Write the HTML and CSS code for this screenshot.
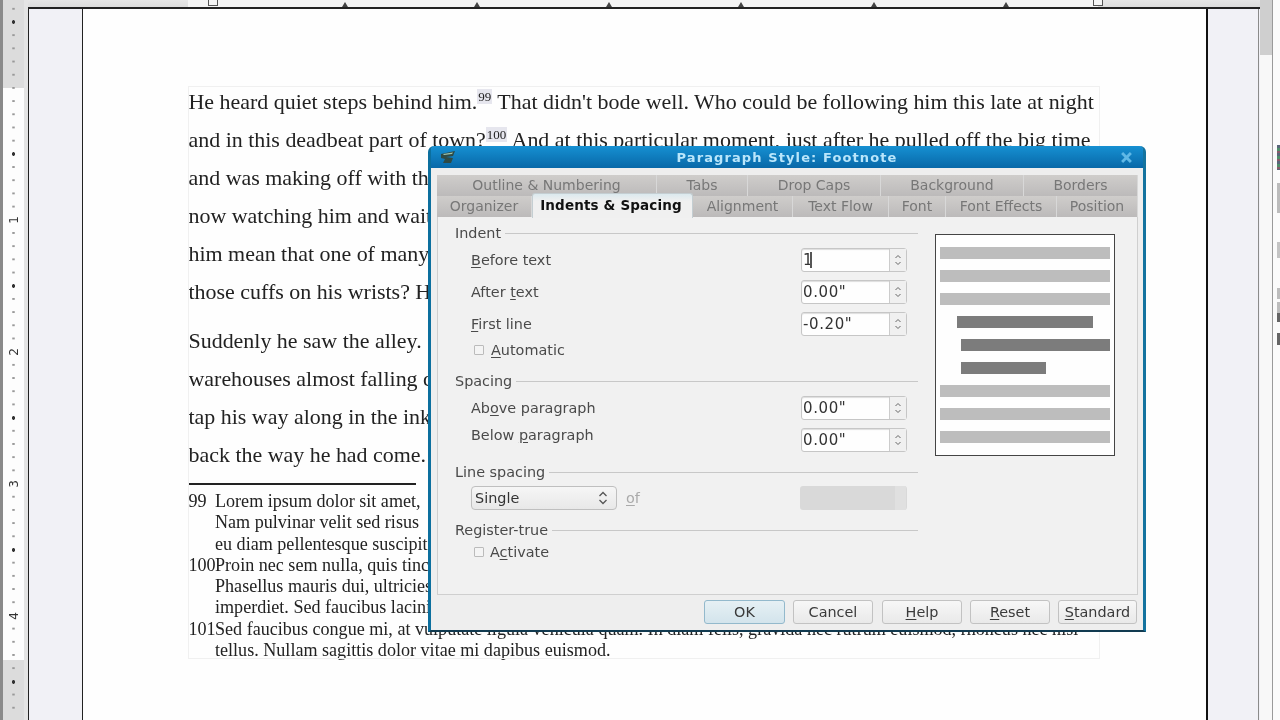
FILE: index.html
```html
<!DOCTYPE html>
<html lang="en">
<head>
<meta charset="utf-8">
<title>Paragraph Style: Footnote</title>
<link rel="stylesheet" href="styles.css">
</head>
<body>
<div class="screen">
  <aside class="vruler">
    <div class="vnum">1</div><div class="vnum">2</div><div class="vnum">3</div><div class="vnum">4</div>
  </aside>
  <div class="gutter"></div>
  <div class="editor">
    <div class="hruler">
      <div class="hruler-active">
        <i class="marker"></i>
        <div class="ticks"><i></i><i></i><i></i><i></i><i></i><i></i></div>
        <i class="marker marker-end"></i>
      </div>
    </div>
    <div class="workspace">
      <main class="page">
        <div class="textarea">
          <p class="line">He heard quiet steps behind him.<sup class="field">99</sup> That didn't bode well. Who could be following him this late at night</p>
          <p class="line">and in this deadbeat part of town?<sup class="field">100</sup> And at this particular moment, just after he pulled off the big time</p>
          <p class="line">and was making off with the</p>
          <p class="line">now watching him and waiting</p>
          <p class="line">him mean that one of many</p>
          <p class="line">those cuffs on his wrists? He</p>
          <p class="line para-start">Suddenly he saw the alley.</p>
          <p class="line">warehouses almost falling down</p>
          <p class="line">tap his way along in the ink</p>
          <p class="line">back the way he had come.</p>
          <div class="fn-rule"></div>
          <div class="fn"><span class="fn-num">99</span><span>Lorem ipsum dolor sit amet,</span></div>
          <div class="fn"><span class="fn-num"></span><span>Nam pulvinar velit sed risus</span></div>
          <div class="fn"><span class="fn-num"></span><span>eu diam pellentesque suscipit</span></div>
          <div class="fn"><span class="fn-num">100</span><span>Proin nec sem nulla, quis tincidunt</span></div>
          <div class="fn"><span class="fn-num"></span><span>Phasellus mauris dui, ultricies</span></div>
          <div class="fn"><span class="fn-num"></span><span>imperdiet. Sed faucibus lacinia</span></div>
          <div class="fn"><span class="fn-num">101</span><span>Sed faucibus congue mi, at vulputate ligula vehicula quam. In diam felis, gravida nec rutrum euismod, rhoncus nec nisl</span></div>
          <div class="fn"><span class="fn-num"></span><span>tellus. Nullam sagittis dolor vitae mi dapibus euismod.</span></div>
        </div>
      </main>
    </div>
  </div>
  <div class="vscroll"><div class="thumb"></div></div>
  <aside class="sidebar">
    <i class="side-colors"></i><i class="b1"></i><i class="b2"></i><i class="b3"></i><i class="b4"></i><i class="b5"></i><i class="b6"></i>
  </aside>

  <section class="dialog">
    <header class="titlebar">
      <svg class="title-icon" viewBox="0 0 16 14" width="18" height="14"><path d="M1 4 L15 1 L13 6 L6 7 L13 8 L11 13 L3 13 L5 9 L1 8Z" fill="#2f4a44"/><path d="M3 4 L13 2.4 L12 4 L4 5Z" fill="#9fc6b0"/></svg>
      <span class="title-text">Paragraph Style: Footnote</span>
      <svg class="title-close" viewBox="0 0 10 10" width="11" height="11"><path d="M1 1 L9 9 M9 1 L1 9" stroke="#5fb8e6" stroke-width="2.6"/></svg>
    </header>
    <div class="dialog-body">
      <div class="tabrow tabrow-back">
        <span class="tab w219">Outline &amp; Numbering</span><span class="tab w91">Tabs</span><span class="tab w133">Drop Caps</span><span class="tab w143">Background</span><span class="tab w114">Borders</span>
      </div>
      <div class="tabrow tabrow-front">
        <span class="tab w95">Organizer</span><span class="tab tab-active">Indents &amp; Spacing</span><span class="tab w100">Alignment</span><span class="tab w96">Text Flow</span><span class="tab w57">Font</span><span class="tab w111">Font Effects</span><span class="tab w81">Position</span>
      </div>
      <div class="panel">
        <div class="form">
          <div class="sec"><span>Indent</span></div>
          <div class="row"><label><u>B</u>efore text</label><div class="spin"><span class="val">1<i class="caret"></i></span><span class="updown"><svg viewBox="0 0 8 14" width="8" height="14"><path d="M1.5 5 L4 2.5 L6.5 5 M1.5 9 L4 11.5 L6.5 9" fill="none" stroke="#666"/></svg></span></div></div>
          <div class="row"><label>After <u>t</u>ext</label><div class="spin"><span class="val">0.00"</span><span class="updown"><svg viewBox="0 0 8 14" width="8" height="14"><path d="M1.5 5 L4 2.5 L6.5 5 M1.5 9 L4 11.5 L6.5 9" fill="none" stroke="#666"/></svg></span></div></div>
          <div class="row"><label><u>F</u>irst line</label><div class="spin"><span class="val">-0.20"</span><span class="updown"><svg viewBox="0 0 8 14" width="8" height="14"><path d="M1.5 5 L4 2.5 L6.5 5 M1.5 9 L4 11.5 L6.5 9" fill="none" stroke="#666"/></svg></span></div></div>
          <div class="check check-auto"><i class="box"></i><span><u>A</u>utomatic</span></div>
          <div class="sec sec-spacing"><span>Spacing</span></div>
          <div class="row"><label>Ab<u>o</u>ve paragraph</label><div class="spin"><span class="val">0.00"</span><span class="updown"><svg viewBox="0 0 8 14" width="8" height="14"><path d="M1.5 5 L4 2.5 L6.5 5 M1.5 9 L4 11.5 L6.5 9" fill="none" stroke="#666"/></svg></span></div></div>
          <div class="row"><label class="raised">Below <u>p</u>aragraph</label><div class="spin"><span class="val">0.00"</span><span class="updown"><svg viewBox="0 0 8 14" width="8" height="14"><path d="M1.5 5 L4 2.5 L6.5 5 M1.5 9 L4 11.5 L6.5 9" fill="none" stroke="#666"/></svg></span></div></div>
          <div class="sec sec-line"><span>Line spacing</span></div>
          <div class="row row-select">
            <div class="select"><span>Single</span><svg viewBox="0 0 10 16" width="10" height="16"><path d="M1.5 6 L5 2.5 L8.5 6 M1.5 10 L5 13.5 L8.5 10" fill="none" stroke="#555" stroke-width="1.3"/></svg></div>
            <span class="of"><u>o</u>f</span>
            <div class="spin-disabled"><i></i></div>
          </div>
          <div class="sec sec-register"><span>Register-true</span></div>
          <div class="check check-activate"><i class="box"></i><span>A<u>c</u>tivate</span></div>
        </div>
        <div class="preview">
          <i class="bar"></i><i class="bar"></i><i class="bar"></i>
          <i class="bar dark d1"></i><i class="bar dark d2"></i><i class="bar dark d3"></i>
          <i class="bar"></i><i class="bar"></i><i class="bar"></i>
        </div>
      </div>
      <footer class="buttons">
        <button class="btn btn-ok">OK</button>
        <button class="btn">Cancel</button>
        <button class="btn btn-help"><u>H</u>elp</button>
        <button class="btn"><u>R</u>eset</button>
        <button class="btn btn-std"><u>S</u>tandard</button>
      </footer>
    </div>
  </section>
</div>
</body>
</html>
```
FILE: styles.css
```css
* { box-sizing: border-box; }
html, body { margin: 0; padding: 0; background: #f1f1f6; }
.screen {
  position: relative;
  width: 1280px; height: 720px; overflow: hidden;
  display: flex;
  background: #f1f1f6;
  border-left: 3px solid #8a8a8a;
  filter: blur(0.45px);
}

/* vertical ruler */
.vruler {
  width: 21px; flex: none; height: 720px;
  padding-top: 213px;
  display: flex; flex-direction: column; align-items: center;
  background:
    linear-gradient(#dcdcdc, #dcdcdc) top / 100% 88px no-repeat,
    linear-gradient(#dcdcdc, #dcdcdc) bottom / 100% 60px no-repeat,
    #fdfdfd;
  position: relative;
}
.vruler::before {
  content: ""; position: absolute; inset: 0;
  background:
    radial-gradient(circle at 50% 50%, #333 1.5px, transparent 2px) 0 88px / 100% 132px repeat-y,
    radial-gradient(circle at 50% 50%, #999 1px, transparent 1.4px) 0 2.2px / 100% 13.2px repeat-y;
}
.vnum {
  flex: none;
  width: 14px; height: 14px; margin-bottom: 118px;
  text-align: center;
  font: 12px/14px "DejaVu Sans", sans-serif; color: #333;
  transform: rotate(-90deg);
  position: relative; background: #fdfdfd;
}
.gutter { width: 4px; flex: none; background: #e4e4e4; }

/* editor */
.editor { width: 1232px; flex: none; display: flex; flex-direction: column; }
.hruler {
  height: 9px; flex: none;
  background: linear-gradient(#e6e6e6, #dcdcdc);
  border-bottom: 2px solid #222;
  padding-left: 160px;
}
.hruler-active {
  position: relative;
  width: 910px; height: 7px;
  background: #f4f4f4;
  padding-left: 24px;
}
.ticks { display: flex; padding-left: 132.5px; }
.ticks i {
  flex: none; width: 132.3px; height: 7px; position: relative;
}
.ticks i::before {
  content: ""; position: absolute; left: -3px; top: 2px;
  border-left: 3px solid transparent; border-right: 3px solid transparent;
  border-bottom: 5px solid #444;
}
.marker {
  position: absolute; left: 20px; top: 0;
  width: 10px; height: 6px;
  border: 1.5px solid #555; border-top: 0; background: #f4f4f4;
}
.marker-end { left: 905px; }
.workspace {
  flex: 1; min-height: 0;
  padding: 0 52px 0 53px;
  border-left: 1.5px solid #222;
  border-right: 1px solid #8a8a8a;
  width: 1231px;
}
.page {
  width: 1126px; height: 100%;
  background: #fefefe;
  border-left: 1.5px solid #222;
  border-right: 2.5px solid #111;
  padding: 78px 0 0 105.5px;
}
.textarea {
  width: 910px; height: 571px;
  outline: 1px solid #f0f0f0;
  font-family: "Liberation Serif", "Times New Roman", serif;
  color: #222;
}
.line {
  margin: 0; height: 38px; line-height: 30px;
  font-size: 21.95px; white-space: nowrap;
}
.para-start { margin-top: 11px; }
.field {
  background: #e6e6ee; font-size: 13px; line-height: 1;
  vertical-align: 8px; padding: 0 1px;
}
.fn-rule { width: 227px; height: 2px; background: #222; margin-top: 5px; margin-bottom: 6px; }
.fn {
  display: flex; height: 21.3px; line-height: 21px;
  font-size: 18.1px; white-space: nowrap;
}
.fn-num { width: 26.5px; flex: none; }

/* right scrollbar */
.vscroll {
  width: 13px; flex: none;
  background: #f8f8f8;
  border-right: 1px solid #9a9a9a;
}
.thumb { height: 55px; background: #cfcfcf; }
.sidebar {
  flex: none; width: 7px; background: #fbfbfb;
  padding: 145px 0 0 4px;
  display: flex; flex-direction: column;
}
.sidebar i { display: block; flex: none; background: #9a9a9a; }
.sidebar .side-colors { height: 25px; background: repeating-linear-gradient(#59667a 0 3px, #4f8f6a 3px 6px, #8a5a6a 6px 8px); }
.sidebar .b1 { height: 30px; margin-top: 13px; background: #bcbcbc; }
.sidebar .b2 { height: 16px; margin-top: 29px; background: #c4c4c4; }
.sidebar .b3 { height: 11px; margin-top: 30px; background: #bdbdbd; }
.sidebar .b4 { height: 13px; margin-top: 3px; background: #bdbdbd; }
.sidebar .b5 { height: 9px; margin-top: -2px; background: #666; }
.sidebar .b6 { height: 12px; margin-top: 11px; background: #666; }

/* dialog */
.dialog {
  position: absolute; left: 425px; top: 146px;
  width: 718px; height: 486px;
  background: #8fcbe8;
  border-left: 3px solid #0c6f9e;
  border-right: 3px solid #14739f;
  border-bottom: 2px solid #113a50;
  border-radius: 6px 6px 0 0;
  font-family: "DejaVu Sans", sans-serif;
  display: flex; flex-direction: column;
}
.titlebar {
  height: 22px; flex: none;
  display: flex; align-items: center; justify-content: center;
  position: relative;
  background: linear-gradient(#1690d2, #0868a8);
  border-radius: 4px 4px 0 0;
}
.title-text {
  color: #b9e6fb; font-weight: 700; font-size: 13px; letter-spacing: 1.1px;
}
.title-icon { position: absolute; left: 8px; top: 4px; }
.title-close { position: absolute; right: 11px; top: 6px; }
.dialog-body {
  flex: 1; min-height: 0;
  background: #eeeeee;
  padding: 7px 5px 0 6px;
  display: flex; flex-direction: column;
}
.tabrow { display: flex; flex: none; height: 21px; color: #777; font-size: 14px; line-height: 19px; }
.tabrow-front { position: relative; }
.tab {
  flex: none; display: flex; align-items: flex-start; justify-content: center;
  padding-top: 1px;
  background: linear-gradient(#cfcdcb, #bcbaba);
  border-right: 1px solid #d8d8d8;
  white-space: nowrap;
}
.tab-active {
  width: 161px; height: 25px; margin-top: -3px; position: relative; z-index: 1;
  background: linear-gradient(#dbe9ee, #f0f0f0 30%);
  border: 1px solid #c4ced2; border-bottom: 0; border-radius: 3px 3px 0 0;
  color: #111; font-weight: 700; font-size: 13.5px; letter-spacing: 0.15px;
  padding: 2px 3px 0 0;
}
.w219 { width: 220px; } .w91 { width: 91px; } .w133 { width: 133px; } .w143 { width: 143px; } .w114 { width: 114px; }
.w95 { width: 95px; } .w100 { width: 100px; } .w96 { width: 96px; } .w57 { width: 57px; } .w111 { width: 111px; } .w81 { width: 81px; }
.panel {
  flex: none; height: 378px; width: 701px;
  border: 1px solid #cfcfcf; border-top: 0;
  background: #f1f1f1;
  padding: 7px 22px 0 16px;
  display: flex; justify-content: space-between; align-items: flex-start;
  color: #4a4a4a; font-size: 14.4px;
}
.form { width: 464px; flex: none; }
.sec { display: flex; align-items: center; gap: 4px; height: 18px; margin-bottom: 6px; padding-left: 1px; }
.sec::after { content: ""; flex: 1; height: 1px; background: #c8c8c8; }
.sec-spacing { margin-top: 12px; margin-bottom: 6px; }
.sec-line { margin-top: 11px; margin-bottom: 5px; }
.sec-register { margin-top: 11px; margin-bottom: 3px; }
.row {
  display: flex; align-items: center; justify-content: space-between;
  height: 24px; margin-bottom: 8px; padding-left: 17px;
}
.raised { position: relative; top: -5px; }
u { text-underline-offset: 2px; }
.spin {
  width: 106px; height: 24px; flex: none; margin-right: 11px;
  display: flex; align-items: stretch;
  background: #fefefe;
  border: 1px solid #c6c6c6; border-radius: 3px;
  box-shadow: inset 0 1px 1px #ddd;
  color: #333;
}
.val { flex: 1; padding-left: 1px; line-height: 22px; position: relative; font-size: 15px; letter-spacing: 0.6px; }
.caret { position: absolute; left: 8px; top: 3px; width: 2px; height: 16px; background: #555; }
.updown {
  width: 17px; flex: none; display: flex; align-items: center; justify-content: center;
  background: #f0f0f0; border-left: 1px solid #ccc;
}
.check { display: flex; align-items: center; height: 20px; gap: 7px; padding-left: 20px; }
.check-auto { margin-top: -4px; }
.check-activate { gap: 6px; }
.box { width: 10px; height: 10px; flex: none; background: #f4f4f4; border: 1px solid #bbb; border-radius: 1px; }
.row-select { justify-content: flex-start; padding-right: 11px; margin-bottom: 0; height: 24px; }
.select {
  width: 146px; height: 24px; flex: none;
  display: flex; align-items: center; justify-content: space-between;
  padding: 0 8px 0 3px;
  background: linear-gradient(#f6f6f6, #e8e8e8);
  border: 1px solid #bfbfbf; border-radius: 4px;
  color: #333;
}
.of { margin-left: 9px; color: #aaa; }
.spin-disabled {
  width: 107px; height: 24px; margin-left: auto;
  background: #d9d9d9; border-radius: 3px;
  display: flex; justify-content: flex-end;
}
.spin-disabled i { width: 11px; margin-right: 1px; background: #e0e0e0; }
.preview {
  width: 180px; height: 222px; flex: none; margin-top: 10px;
  background: #fefefe;
  border: 1px solid #444;
  padding: 12px 4px 0 4px;
  display: flex; flex-direction: column; gap: 11px;
}
.bar { display: block; height: 12px; flex: none; width: 170px; background: #bdbdbd; }
.bar.dark { background: #7c7c7c; }
.d1 { width: 136px; margin-left: 17px; }
.d2 { width: 149px; margin-left: 21px; }
.d3 { width: 85px; margin-left: 21px; }
.buttons {
  flex: none; display: flex; justify-content: flex-end; gap: 8px;
  padding: 5px 1px 0 0; width: 701px;
}
.btn {
  width: 80px; height: 24px; padding: 0;
  font: 14.4px "DejaVu Sans", sans-serif; color: #3a3a3a;
  background: linear-gradient(#f7f7f7, #e9e9e9);
  border: 1px solid #c2c2c2; border-radius: 3px;
}
.btn-ok { width: 81px; background: linear-gradient(#e6f0f4, #d3e4ec); border-color: #93b9cc; }
.btn-help { margin-left: 1px; }
.btn-std { width: 79px; }
```
